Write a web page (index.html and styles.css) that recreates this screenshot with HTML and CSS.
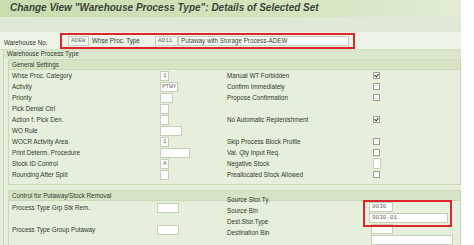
FILE: index.html
```html
<!DOCTYPE html>
<html lang="en">
<head>
  <meta charset="UTF-8">
  <title>Change View "Warehouse Process Type": Details of Selected Set</title>
  <link rel="stylesheet" href="styles.css">
</head>
<body>
  <div class="page">
    <div class="titlebar">Change View "Warehouse Process Type": Details of Selected Set</div>
    <div class="toolbar"></div>

    <div class="keyrow">
      <span class="key-label">Warehouse No.</span>
      <div class="hilite">
        <span class="field mono w-key">ADEW</span>
        <span class="key-label2">Whse Proc. Type</span>
        <span class="field mono w-type">AD11</span>
        <span class="field w-desc">Putaway with Storage Process-ADEW</span>
      </div>
    </div>

    <div class="outer">
      <div class="outer-title">Warehouse Process Type</div>

      <div class="group">
        <div class="group-head">General Settings</div>
        <div class="grid">
          <span class="lbl">Whse Proc. Category</span><span><span class="field mono w8">1</span></span>
          <span class="lbl">Manual WT Forbidden</span><span><span class="chk on"></span></span>

          <span class="lbl">Activity</span><span><span class="field mono w16">PTWY</span></span>
          <span class="lbl">Confirm Immediately</span><span><span class="chk"></span></span>

          <span class="lbl">Priority</span><span><span class="field w12"></span></span>
          <span class="lbl">Propose Confirmation</span><span><span class="chk"></span></span>

          <span class="lbl">Pick Denial Ctrl</span><span><span class="field w8"></span></span>
          <span></span><span></span>

          <span class="lbl">Action f. Pick Den.</span><span><span class="field w8"></span></span>
          <span class="lbl">No Automatic Replenishment</span><span><span class="chk on"></span></span>

          <span class="lbl">WO Rule</span><span><span class="field w20"></span></span>
          <span></span><span></span>

          <span class="lbl">WOCR Activity Area</span><span><span class="field mono w8">1</span></span>
          <span class="lbl">Skip Process Block Profile</span><span><span class="chk"></span></span>

          <span class="lbl">Print Determ. Procedure</span><span><span class="field w28"></span></span>
          <span class="lbl">Val. Qty Input Req.</span><span><span class="chk"></span></span>

          <span class="lbl">Stock ID Control</span><span><span class="field mono w8">A</span></span>
          <span class="lbl">Negative Stock</span><span><span class="field w7"></span></span>

          <span class="lbl">Rounding After Split</span><span><span class="field w8"></span></span>
          <span class="lbl">Preallocated Stock Allowed</span><span><span class="chk"></span></span>
        </div>
      </div>

      <div class="group group-ctrl">
        <div class="group-head">Control for Putaway/Stock Removal</div>
        <div class="ctrl">
          <div class="ctrl-left">
            <div class="row row-first">
              <span class="lbl">Process Type Grp Stk Rem.</span><span class="field w20"></span>
            </div>
            <div class="row row-second">
              <span class="lbl">Process Type Group Putaway</span><span class="field w20"></span>
            </div>
          </div>
          <div class="ctrl-right">
            <div class="col-labels">
              <div class="row">Source Stor.Ty.</div>
              <div class="row">Source Bin</div>
              <div class="row">Dest.Stor.Type</div>
              <div class="row">Destination Bin</div>
            </div>
            <div class="col-fields">
              <div class="row"><span class="field mono w23">9030</span></div>
              <div class="row"><span class="field mono w78">9030-01</span></div>
              <div class="row"><span class="field w20 nudge"></span></div>
              <div class="row"><span class="field w80 nudge"></span></div>
              <div class="redmark"></div>
            </div>
          </div>
        </div>
      </div>
    </div>
  </div>
</body>
</html>
```

FILE: styles.css
```css
html, body {
  margin: 0;
  padding: 0;
  background: #fff;
}

body {
  font-family: "Liberation Sans", Arial, sans-serif;
  font-size: 6.3px;
  color: #2f3a2c;
  height: 245px;
  overflow: hidden;
}

.page {
  width: 461px;
  background: #e5eed9;
  min-height: 245px;
}

.titlebar {
  height: 17px;
  line-height: 16px;
  padding-left: 10px;
  font-size: 10px;
  font-weight: bold;
  font-style: italic;
  color: #3b4536;
  background: linear-gradient(to right, #c9dcb0, #d6e5c2 70%, #e2ecd6);
  white-space: nowrap;
}

.toolbar {
  height: 15px;
  background: #e0e9d5;
}

.keyrow {
  display: flex;
  align-items: center;
  height: 17px;
  background: #eef3e8;
  border-bottom: 1px solid #d2dfc3;
}
.key-label {
  width: 56px;
  padding-left: 4px;
  padding-top: 3px;
}
.hilite {
  display: flex;
  align-items: center;
  width: 285px;
  height: 12px;
  padding-left: 6px;
  border: 2px solid #e0262b;
}
.key-label2 {
  width: 63px;
  padding-left: 3px;
}

.field {
  display: inline-block;
  height: 8px;
  line-height: 8px;
  background: #fff;
  border: 1px solid #c5cfb9;
  padding-left: 2px;
  vertical-align: middle;
  color: #555;
}
.mono {
  font-family: "Liberation Mono", "Courier New", monospace;
  font-size: 6px;
  color: #6a6a6a;
}
.w-key { width: 17px; background: #f6f8f2; }
.w-type { width: 19px; background: #f6f8f2; }
.w-desc { width: 167px; font-size: 6.3px; color: #2f3a2c; }
.w7 { width: 4px; height: 9px; }
.w8 { width: 5px; }
.w12 { width: 9px; }
.w16 { width: 15px; padding-left: 1px; }
.w20 { width: 18px; }
.w23 { width: 20px; }
.w28 { width: 26px; }
.w78 { width: 75px; }
.w80 { width: 78px; }

.outer {
  margin-left: 3px;
  border-left: 1px solid #cbd9ba;
}
.outer-title {
  height: 8px;
  line-height: 8px;
  padding-left: 3px;
  background: #dbe7cc;
}

.group {
  margin: 1px 0 0 4px;
  border: 1px solid #cbd9ba;
  background: #e6efdb;
}
.group-head {
  height: 9px;
  line-height: 9px;
  padding-left: 3px;
  background: #d6e4c5;
  border-bottom: 1px solid #cad8b9;
}

.grid {
  display: grid;
  grid-template-columns: 148px 67px 146px auto;
  grid-auto-rows: 11px;
  align-items: center;
  padding: 0 0 4px 3px;
}

.lbl {
  white-space: nowrap;
}

.chk {
  display: inline-block;
  width: 5px;
  height: 5px;
  border: 1px solid #9aa28f;
  background: #fff;
  vertical-align: middle;
  position: relative;
}
.chk.on::after {
  content: "";
  position: absolute;
  left: 1px;
  top: 0;
  width: 2px;
  height: 3px;
  border: solid #333;
  border-width: 0 1px 1px 0;
  transform: rotate(40deg);
}

.group-ctrl {
  margin-top: 5px;
  height: 60px;
}
.ctrl {
  display: flex;
}
.ctrl-left {
  width: 215px;
  padding-left: 3px;
}
.row {
  display: flex;
  align-items: center;
  height: 11px;
  white-space: nowrap;
}
.row .lbl {
  width: 145px;
}
.row-first {
  margin-top: 1px;
}
.row-second {
  margin-top: 11px;
}

.ctrl-right {
  display: flex;
  align-items: flex-start;
}
.col-labels {
  width: 142px;
  margin-top: -7px;
}
.col-fields {
  position: relative;
  margin-top: 0;
}
.nudge {
  margin-left: 2px;
}
/* red annotation frame drawn over the source fields */
.redmark {
  position: absolute;
  left: -6px;
  top: -1px;
  width: 85px;
  height: 23px;
  border: 2px solid #e0262b;
}
```
